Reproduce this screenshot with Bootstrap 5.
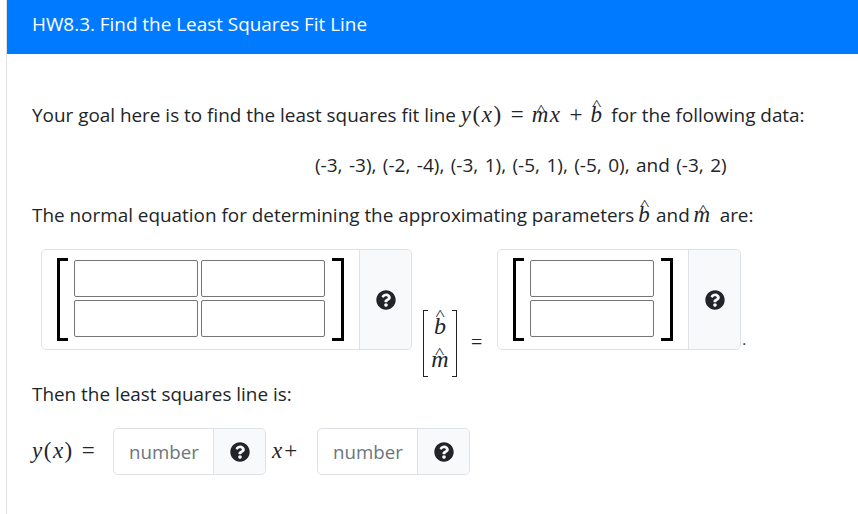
<!DOCTYPE html>
<html lang="en">
<head>
  <meta charset="UTF-8">
  <meta name="viewport" content="width=device-width, initial-scale=1">
  <title>HW8.3</title>
  <link href="https://cdn.jsdelivr.net/npm/bootstrap@5.3.3/dist/css/bootstrap.min.css" rel="stylesheet">
  <style>
    body {
      font-family: "Open Sans", sans-serif;
      font-size: 18.9px;
      color: #212529;
      overflow: hidden;
    }
    .hw-card {
      margin-left: 6px;
      width: 860px;
      height: 530px;
      border-radius: 0;
      border-color: #dfdfdf;
      border-width: 0 0 0 1px;
    }
    .hw-head {
      background: #007bff;
      color: #fff;
      height: 54px;
      padding: 9px 25px 0;
      line-height: 30px;
      border: 0;
      border-radius: 0 !important;
    }
    .hw-body {
      padding: 46px 0 0 25px;
    }
    .hw-line {
      height: 30px;
      line-height: 30px;
      margin-bottom: 20px;
      white-space: nowrap;
    }
    .hw-data {
      padding-left: 283px;
      font-size: 19px;
      word-spacing: 1.5px;
    }
    .hw-last { margin-bottom: 19px; }
    .tex {
      font-family: "Liberation Serif", serif;
      font-size: 23px;
      white-space: nowrap;
      letter-spacing: 1.5px;
    }
    .tex-op {
      letter-spacing: 0;
      margin: 0 8px;
    }
    .tex-end { margin-right: 3px; }
    .tex-b { margin: 0 0 0 -1px; }
    .tex-m { margin: 0 3px 0 -1px; }
    .hatted {
      position: relative;
      display: inline-block;
    }
    .hatted::after {
      content: "^";
      position: absolute;
      left: 0;
      right: 0;
      top: 1px;
      line-height: 20px;
      text-align: center;
      font-style: normal;
      font-size: 14px;
      letter-spacing: 0;
      transform: scaleX(1.4);
    }
    .hat-tall::after { top: -4px; }
    .eq-row {
      height: 130px;
      margin-left: 9px;
    }
    .answer-box {
      height: 101px;
      border: 1px solid #dee2e6;
      border-radius: 5px;
      flex: none;
    }
    .matrix-wrap {
      padding: 0 15px;
      align-items: center;
    }
    .brk {
      height: 83px;
      border: 3px solid #000;
      flex: none;
    }
    .brk-l { width: 11px; margin-right: 6px; border-right: 0; }
    .brk-r { width: 12px; margin-left: 7px; border-left: 0; }
    .cells {
      display: grid;
      gap: 3px;
      margin-bottom: 2px;
    }
    .cells input {
      display: block;
      width: 124px;
      height: 37px;
      border: 1px solid #767676;
      border-radius: 2px;
      background: #fff;
    }
    .cell-pair {
      display: flex;
      gap: 3px;
    }
    .help-cell {
      width: 52px;
      background: #f8f9fa;
      border-left: 1px solid #dee2e6;
      border-radius: 0 5px 5px 0;
      flex: none;
    }
    .help-cell svg {
      width: 20px;
      height: 20px;
      fill: #212529;
    }
    .vec {
      margin: 61px 0 0 11px;
      width: 34px;
      height: 67px;
      position: relative;
      flex: none;
      font-size: 24px;
      line-height: 33px;
      letter-spacing: 0;
      text-align: center;
    }
    .vec::before, .vec::after {
      content: "";
      position: absolute;
      top: 0;
      bottom: 0;
      width: 5px;
      border: 1px solid #222;
    }
    .vec::before { left: 0; border-right: 0; }
    .vec::after { right: 0; border-left: 0; }
    .vec-eq {
      margin: 83px 15px 0 14px;
      font-size: 20px;
      line-height: 20px;
      letter-spacing: 0;
      flex: none;
    }
    .stop {
      align-self: flex-start;
      margin: 80px 0 0 1px;
      font-size: 15px;
      line-height: 20px;
    }
    .then-line {
      line-height: 30px;
      margin-bottom: 19px;
    }
    .num-box {
      height: 47px;
      width: 153px;
      border: 1px solid #dee2e6;
      border-radius: 5px;
      flex: none;
    }
    .num-box input {
      width: 99px;
      border: 0;
      outline: 0;
      padding: 1px 0 0 15px;
      background: transparent;
      border-radius: 5px 0 0 5px;
      font-size: 18.7px;
      font-family: inherit;
    }
    .num-box input::placeholder { color: #6c757d; opacity: 1; }
    .lhs { width: 81px; flex: none; }
    .midterm { width: 51px; flex: none; padding-left: 6px; letter-spacing: 2px; }
  </style>
</head>
<body>
  <div class="card hw-card">
    <div class="card-header hw-head">HW8.3. Find the Least Squares Fit Line</div>
    <div class="hw-body">
      <p class="hw-line">Your goal here is to find the least squares fit line <span class="tex"><i>y</i>(<i>x</i>)<span class="tex-op">=</span><i class="hatted">m</i><i>x</i><span class="tex-op">+</span><i class="hatted hat-tall tex-end">b</i></span> for the following data:</p>
      <p class="hw-line hw-data">(-3, -3), (-2, -4), (-3, 1), (-5, 1), (-5, 0), and (-3, 2)</p>
      <p class="hw-line hw-last">The normal equation for determining the approximating parameters <span class="tex tex-b"><i class="hatted hat-tall">b</i></span> and <span class="tex tex-m"><i class="hatted">m</i></span> are:</p>

      <div class="d-flex eq-row">
        <div class="answer-box d-flex">
          <div class="d-flex matrix-wrap">
            <div class="brk brk-l"></div>
            <div class="cells">
              <div class="cell-pair"><input type="text"><input type="text"></div>
              <div class="cell-pair"><input type="text"><input type="text"></div>
            </div>
            <div class="brk brk-r"></div>
          </div>
          <div class="help-cell d-flex align-items-center justify-content-center"><svg viewBox="0 0 512 512"><use href="#qmark"/></svg></div>
        </div>
        <div class="vec tex"><span class="d-block"><i class="hatted hat-tall">b</i></span><span class="d-block"><i class="hatted">m</i></span></div>
        <div class="vec-eq tex">=</div>
        <div class="answer-box d-flex">
          <div class="d-flex matrix-wrap">
            <div class="brk brk-l"></div>
            <div class="cells"><input type="text"><input type="text"></div>
            <div class="brk brk-r"></div>
          </div>
          <div class="help-cell d-flex align-items-center justify-content-center"><svg viewBox="0 0 512 512"><use href="#qmark"/></svg></div>
        </div>
        <div class="stop">.</div>
      </div>

      <p class="then-line">Then the least squares line is:</p>

      <div class="d-flex align-items-center">
        <div class="tex lhs"><i>y</i>(<i>x</i>)<span class="tex-op">=</span></div>
        <div class="num-box d-flex">
          <input type="text" placeholder="number">
          <div class="help-cell d-flex align-items-center justify-content-center"><svg viewBox="0 0 512 512"><use href="#qmark"/></svg></div>
        </div>
        <div class="tex midterm"><i>x</i>+</div>
        <div class="num-box d-flex">
          <input type="text" placeholder="number">
          <div class="help-cell d-flex align-items-center justify-content-center"><svg viewBox="0 0 512 512"><use href="#qmark"/></svg></div>
        </div>
      </div>
    </div>
  </div>

  <svg width="0" height="0" class="position-absolute">
    <symbol id="qmark" viewBox="0 0 512 512">
      <path d="M504 256c0 136.997-111.043 248-248 248S8 392.997 8 256C8 119.083 119.043 8 256 8s248 111.083 248 248zM262.655 90c-54.497 0-89.255 22.957-116.549 63.758-3.536 5.286-2.353 12.415 2.715 16.258l34.699 26.31c5.205 3.947 12.621 3.008 16.665-2.122 17.864-22.658 30.113-35.797 57.303-35.797 20.429 0 45.698 13.148 45.698 32.958 0 14.976-12.363 22.667-32.534 33.976C247.128 238.528 216 254.941 216 296v4c0 6.627 5.373 12 12 12h56c6.627 0 12-5.373 12-12v-1.333c0-28.462 83.186-29.647 83.186-106.667 0-58.002-60.165-102-116.531-102zM256 338c-25.365 0-46 20.635-46 46 0 25.364 20.635 46 46 46s46-20.636 46-46c0-25.365-20.635-46-46-46z"/>
    </symbol>
  </svg>
  <script src="https://cdn.jsdelivr.net/npm/bootstrap@5.3.3/dist/js/bootstrap.bundle.min.js"></script>
</body>
</html>
